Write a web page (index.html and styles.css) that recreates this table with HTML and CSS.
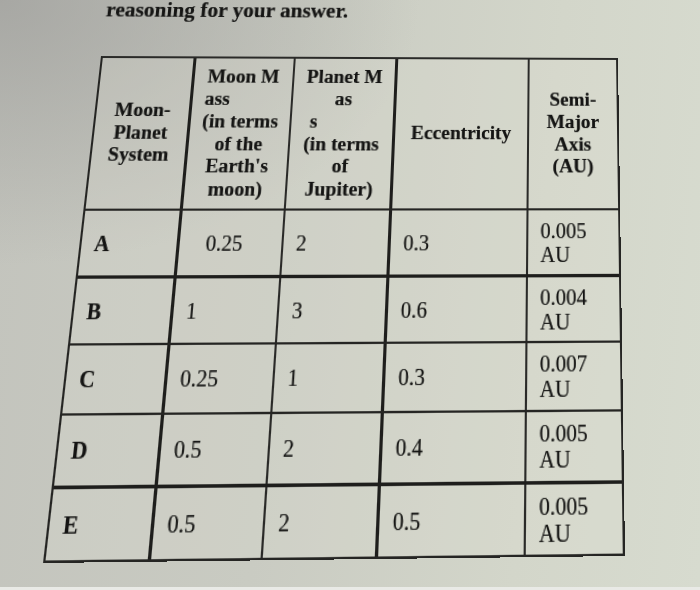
FILE: index.html
```html
<!DOCTYPE html>
<html lang="en">
<head>
<meta charset="utf-8">
<title>Moon-Planet Systems</title>
<link rel="stylesheet" href="styles.css">
</head>
<body>
<div class="sheet">
  <p class="prompt">reasoning for your answer.</p>
  <div class="table">
    <div class="row head">
      <div class="cell"><span>Moon-</span><span>Planet</span><span>System</span></div>
      <div class="cell"><span>Moon M</span><span class="hang hang-a">ass</span><span>(in terms</span><span>of the</span><span>Earth's</span><span>moon)</span></div>
      <div class="cell"><span>Planet M</span><span>as</span><span class="hang hang-b">s</span><span>(in terms</span><span>of</span><span>Jupiter)</span></div>
      <div class="cell"><span>Eccentricity</span></div>
      <div class="cell"><span>Semi-</span><span>Major</span><span>Axis</span><span>(AU)</span></div>
    </div>
    <div class="row data row-a thick">
      <div class="cell key">A</div>
      <div class="cell indent">0.25</div>
      <div class="cell">2</div>
      <div class="cell">0.3</div>
      <div class="cell"><span>0.005</span><span>AU</span></div>
    </div>
    <div class="row data row-b">
      <div class="cell key">B</div>
      <div class="cell">1</div>
      <div class="cell">3</div>
      <div class="cell">0.6</div>
      <div class="cell"><span>0.004</span><span>AU</span></div>
    </div>
    <div class="row data row-c">
      <div class="cell key">C</div>
      <div class="cell">0.25</div>
      <div class="cell">1</div>
      <div class="cell">0.3</div>
      <div class="cell"><span>0.007</span><span>AU</span></div>
    </div>
    <div class="row data row-d thick">
      <div class="cell key">D</div>
      <div class="cell">0.5</div>
      <div class="cell">2</div>
      <div class="cell">0.4</div>
      <div class="cell"><span>0.005</span><span>AU</span></div>
    </div>
    <div class="row data row-e">
      <div class="cell key">E</div>
      <div class="cell">0.5</div>
      <div class="cell">2</div>
      <div class="cell">0.5</div>
      <div class="cell"><span>0.005</span><span>AU</span></div>
    </div>
  </div>
</div>
</body>
</html>
```

FILE: styles.css
```css
html, body {
  margin: 0;
  padding: 0;
}

body {
  width: 700px;
  height: 590px;
  overflow: hidden;
  font-family: "Liberation Serif", "Times New Roman", serif;
  color: #141413;
  background-color: #cbcdc5;
  background-image:
    linear-gradient(to bottom, transparent 587px, #e9eae6 587px),
    radial-gradient(ellipse 60% 45% at 0% 0%, rgba(158, 158, 155, 0.75), rgba(158, 158, 155, 0) 100%),
    linear-gradient(95deg, #c3c4bd 0%, #c9cbc2 40%, #d3d6ca 75%, #d7dbcf 100%);
}

.sheet {
  width: 520px;
  margin-left: 100px;
  display: flex;
  flex-direction: column;
  transform-origin: 0 56px;
  transform: matrix3d(1.0106669, 0.00390962, 0, 0.00003173,
                      -0.1147171, 1.0006124, 0, -0.00024863,
                      0, 0, 1, 0,
                      1, 0, 0, 1);
}

.prompt {
  margin: 0 0 38px;
  height: 18px;
  font-size: 21.5px;
  line-height: 18px;
  font-weight: bold;
  white-space: nowrap;
  color: #161615;
  text-shadow: 0 0 0.6px rgba(20, 20, 19, 0.6);
}

.table {
  box-sizing: border-box;
  width: 520px;
  height: 450px;
  border-top: 2px solid #2a2a28;
  border-left: 2px solid #252523;
  border-right: 2px solid #252523;
  display: flex;
  flex-direction: column;
  background-color: rgba(222, 224, 210, 0.25);
}

.row {
  box-sizing: border-box;
  display: grid;
  grid-template-columns: 92.8px 99.3px 103px 132.6px 88.3px;
  border-bottom: 2px solid #252523;
}

.row.thick {
  border-bottom: 3px solid #1e1e1c;
}

.head { height: 147.2px; }
.row-a { height: 61.7px; }
.row-b { height: 59.6px; }
.row-c { height: 59.9px; }
.row-d { height: 61px; }
.row-e { height: 58.6px; }

.cell {
  display: flex;
  flex-direction: column;
  justify-content: center;
  border-right: 2px solid #2a2a28;
  min-width: 0;
  text-shadow: 0 0 0.6px rgba(20, 20, 19, 0.55);
}

.cell:nth-child(1),
.cell:nth-child(3) {
  border-right: 3px solid #1e1e1c;
}

.cell:last-child {
  border-right: none;
}

.head .cell {
  align-items: center;
  font-size: 19.3px;
  line-height: 21.8px;
  font-weight: bold;
  text-align: center;
}

.head .cell span {
  display: block;
  white-space: nowrap;
}

.head .cell .hang {
  align-self: flex-start;
}

.hang-a { padding-left: 12px; }
.hang-b { padding-left: 18px; }

.data .cell {
  align-items: flex-start;
  padding-left: 12px;
  font-size: 20px;
  line-height: 22px;
}

.data .cell span {
  display: block;
}

.data .cell.key {
  font-weight: bold;
}

.data .cell.indent {
  padding-left: 25px;
}
```
